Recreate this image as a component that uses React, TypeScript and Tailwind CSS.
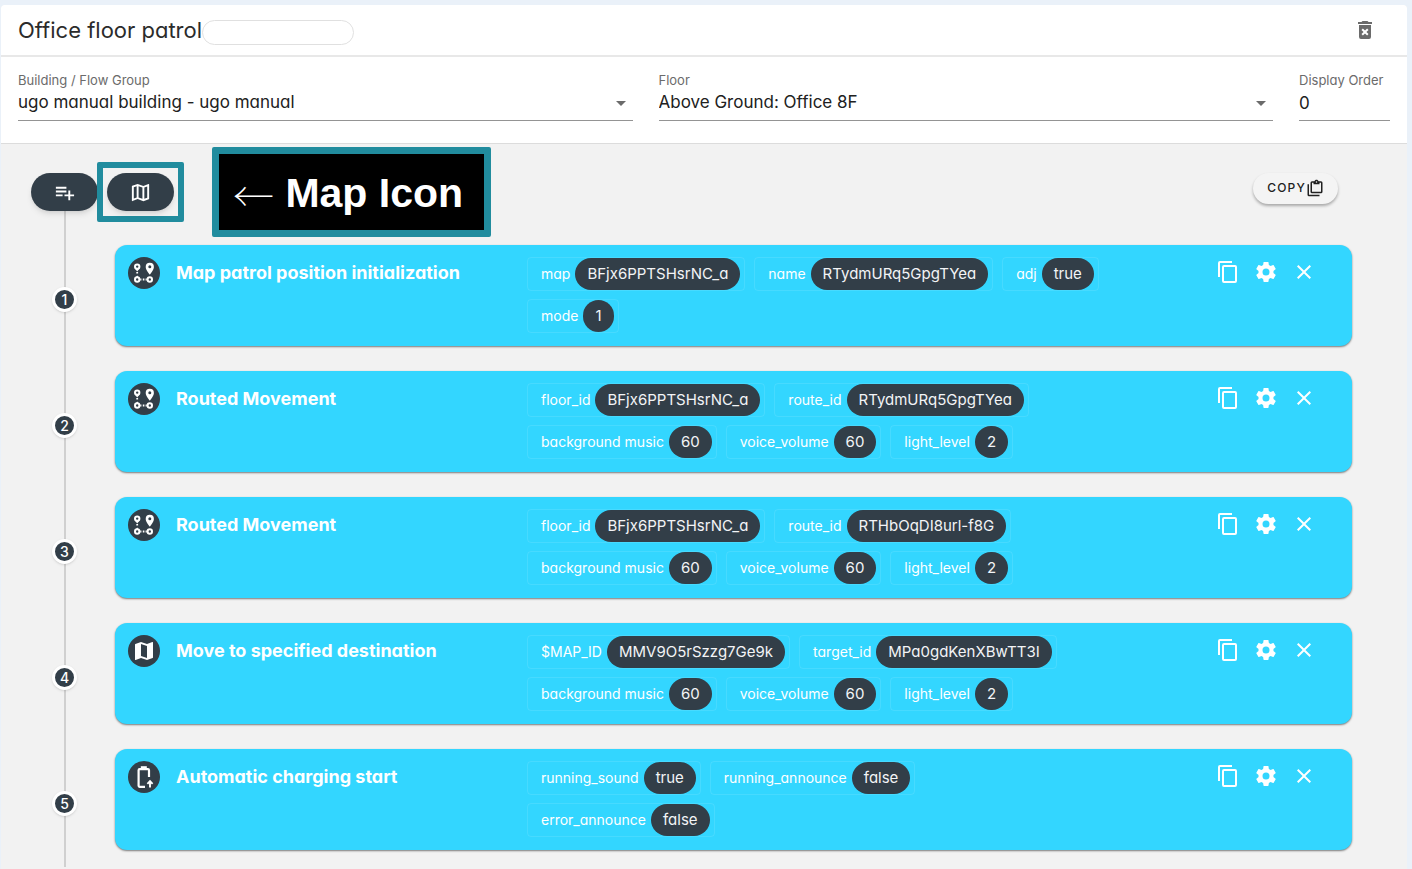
import { useState } from "react";
import type { ReactNode } from "react";

type IconName = "playlistPlus" | "mapOutline" | "map" | "copy" | "cog" | "close" | "trash" | "clipboard" | "caret";

const ICONS: Record<IconName, string> = {
    playlistPlus: "M3 16H10V14H3M18 14V10H16V14H12V16H16V20H18V16H22V14M14 6H3V8H14M14 10H3V12H14V10Z",
    mapOutline: "M20.5,3L20.34,3.03L15,5.1L9,3L3.36,4.9C3.15,4.97 3,5.15 3,5.38V20.5A0.5,0.5 0 0,0 3.5,21L3.66,20.97L9,18.9L15,21L20.64,19.1C20.85,19.03 21,18.85 21,18.62V3.5A0.5,0.5 0 0,0 20.5,3M10,5.47L14,6.87V18.53L10,17.13V5.47M5,6.46L8,5.45V17.15L5,18.31V6.46M19,17.54L16,18.55V6.86L19,5.7V17.54Z",
    map: "M15,19L9,16.89V5L15,7.11M20.5,3C20.44,3 20.39,3 20.34,3L15,5.1L9,3L3.36,4.9C3.15,4.97 3,5.15 3,5.38V20.5A0.5,0.5 0 0,0 3.5,21C3.55,21 3.61,21 3.66,20.97L9,18.9L15,21L20.64,19.1C20.85,19 21,18.85 21,18.62V3.5A0.5,0.5 0 0,0 20.5,3Z",
    copy: "M19,21H8V7H19M19,5H8A2,2 0 0,0 6,7V21A2,2 0 0,0 8,23H19A2,2 0 0,0 21,21V7A2,2 0 0,0 19,5M16,1H4A2,2 0 0,0 2,3V17H4V3H16V1Z",
    cog: "M12,15.5A3.5,3.5 0 0,1 8.5,12A3.5,3.5 0 0,1 12,8.5A3.5,3.5 0 0,1 15.5,12A3.5,3.5 0 0,1 12,15.5M19.43,12.97C19.47,12.65 19.5,12.33 19.5,12C19.5,11.67 19.47,11.34 19.43,11L21.54,9.37C21.73,9.22 21.78,8.95 21.66,8.73L19.66,5.27C19.54,5.05 19.27,4.96 19.05,5.05L16.56,6.05C16.04,5.66 15.5,5.32 14.87,5.07L14.5,2.42C14.46,2.18 14.25,2 14,2H10C9.75,2 9.54,2.18 9.5,2.42L9.13,5.07C8.5,5.32 7.96,5.66 7.44,6.05L4.95,5.05C4.73,4.96 4.46,5.05 4.34,5.27L2.34,8.73C2.21,8.95 2.27,9.22 2.46,9.37L4.57,11C4.53,11.34 4.5,11.67 4.5,12C4.5,12.33 4.53,12.65 4.57,12.97L2.46,14.63C2.27,14.78 2.21,15.05 2.34,15.27L4.34,18.73C4.46,18.95 4.73,19.03 4.95,18.95L7.44,17.94C7.96,18.34 8.5,18.68 9.13,18.93L9.5,21.58C9.54,21.82 9.75,22 10,22H14C14.25,22 14.46,21.82 14.5,21.58L14.87,18.93C15.5,18.67 16.04,18.34 16.56,17.94L19.05,18.95C19.27,19.03 19.54,18.95 19.66,18.73L21.66,15.27C21.78,15.05 21.73,14.78 21.54,14.63L19.43,12.97Z",
    close: "M19,6.41L17.59,5L12,10.59L6.41,5L5,6.41L10.59,12L5,17.59L6.41,19L12,13.41L17.59,19L19,17.59L13.41,12L19,6.41Z",
    trash: "M6,19A2,2 0 0,0 8,21H16A2,2 0 0,0 18,19V7H6V19M8.46,11.88L9.87,10.47L12,12.59L14.12,10.47L15.53,11.88L13.41,14L15.53,16.12L14.12,17.53L12,15.41L9.88,17.53L8.47,16.12L10.59,14L8.46,11.88M15.5,4L14.5,3H9.5L8.5,4H5V6H19V4H15.5Z",
    clipboard: "M4,7V21H18V23H4A2,2 0 0,1 2,21V7H4M20,3A2,2 0 0,1 22,5V17A2,2 0 0,1 20,19H8A2,2 0 0,1 6,17V5A2,2 0 0,1 8,3H11.18C11.6,1.84 12.7,1 14,1C15.3,1 16.4,1.84 16.82,3H20M14,3A1,1 0 0,0 13,4A1,1 0 0,0 14,5A1,1 0 0,0 15,4A1,1 0 0,0 14,3M10,7V5H8V17H20V5H18V7H10Z",
    caret: "M7,10L12,15L17,10H7Z",
};

function Icon({ name, size = 24 }: { name: IconName; size?: number }) {
    return (
        <svg width={size} height={size} viewBox="0 0 24 24" fill="currentColor" fillRule="evenodd" aria-hidden="true">
            <path d={ICONS[name]} />
        </svg>
    );
}

// Route and battery are drawn on the full 32px disc
function RouteIcon() {
    return (
        <svg width={32} height={32} viewBox="0 0 32 32" fill="none" stroke="currentColor" aria-hidden="true">
            <circle cx="9.2" cy="9.6" r="2.2" strokeWidth="2" />
            <path d="M6.8 11.4L9.2 14.4L11.6 11.4Z" fill="currentColor" stroke="none" />
            <path fillRule="evenodd" fill="currentColor" stroke="none" d="M21.8 5.8A4.1 4.1 0 0 0 17.7 9.9C17.7 13 21.8 17.6 21.8 17.6S25.9 13 25.9 9.9A4.1 4.1 0 0 0 21.8 5.8M21.8 8.2A1.5 1.5 0 1 1 21.8 11.2A1.5 1.5 0 1 1 21.8 8.2" />
            <circle cx="9.2" cy="22.5" r="2.2" strokeWidth="2" />
            <circle cx="21.8" cy="22.5" r="2.2" strokeWidth="2" />
            <path d="M7.6 20.4L9.2 18.4L10.8 20.4Z" fill="currentColor" stroke="none" />
            <path d="M9.2 15V16.6M12.2 22.5H13.4M14.8 22.5H16.4M17.6 22.5H18.8" strokeWidth="1.8" />
        </svg>
    );
}

function BatteryIcon() {
    return (
        <svg width={32} height={32} viewBox="0 0 32 32" fill="none" stroke="currentColor" aria-hidden="true">
            <path d="M21 16V9.2Q21 8.2 20 8.2H11.6Q10.6 8.2 10.6 9.2V24.8Q10.6 25.8 11.6 25.8H17" strokeWidth="2.2" />
            <path d="M12.8 5.2H18.8V8H12.8Z" fill="currentColor" stroke="none" />
            <path d="M22 26.6V21M19.4 22.8L22 20.2L24.6 22.8" strokeWidth="1.9" />
        </svg>
    );
}

interface Step {
    title: string;
    icon: ReactNode;
    params: [string, string][];
}

const LEVELS: [string, string][] = [["background music", "60"], ["voice_volume", "60"], ["light_level", "2"]];

const STEPS: Step[] = [
    {
        title: "Map patrol position initialization",
        icon: <RouteIcon />,
        params: [["map", "BFjx6PPTSHsrNC_a"], ["name", "RTydmURq5GpgTYea"], ["adj", "true"], ["mode", "1"]],
    },
    {
        title: "Routed Movement",
        icon: <RouteIcon />,
        params: [["floor_id", "BFjx6PPTSHsrNC_a"], ["route_id", "RTydmURq5GpgTYea"], ...LEVELS],
    },
    {
        title: "Routed Movement",
        icon: <RouteIcon />,
        params: [["floor_id", "BFjx6PPTSHsrNC_a"], ["route_id", "RTHbOqDI8url-f8G"], ...LEVELS],
    },
    {
        title: "Move to specified destination",
        icon: <Icon name="map" />,
        params: [["$MAP_ID", "MMV9O5rSzzg7Ge9k"], ["target_id", "MPa0gdKenXBwTT3I"], ...LEVELS],
    },
    {
        title: "Automatic charging start",
        icon: <BatteryIcon />,
        params: [["running_sound", "true"], ["running_announce", "false"], ["error_announce", "false"]],
    },
];

function SelectField({ id, label, value }: { id: string; label: string; value: string }) {
    return (
        <div className="min-w-0 flex-1">
            <label htmlFor={id} className="block text-[13px] leading-[18px] text-[#6b6b6b]">{label}</label>
            <div className="relative border-b border-[#949494] pb-1">
                <select id={id} defaultValue={value} className="block h-[27px] w-full appearance-none bg-transparent pr-6 text-[17px] text-[#212121] outline-none">
                    <option>{value}</option>
                </select>
                <span className="pointer-events-none absolute right-0 top-0.5 text-[#6b6b6b]"><Icon name="caret" /></span>
            </div>
        </div>
    );
}

function StepCard({ step }: { step: Step }) {
    return (
        <article className="flex min-w-0 flex-1 items-start rounded-xl bg-[#33d6ff] pb-[13px] pl-[13px] pr-9 pt-3 text-white shadow-[0_1px_2px_rgba(0,0,0,0.5)]">
            <div className="flex size-8 shrink-0 items-center justify-center rounded-full bg-[#323e48]">{step.icon}</div>
            <h2 className="ml-4 w-[351px] shrink-0 text-lg/8 font-bold">{step.title}</h2>
            <dl className="flex min-w-0 flex-1 flex-wrap gap-x-[9px] gap-y-2">
                {step.params.map(([key, val]) => (
                    <div key={key} className="flex items-center gap-[5px] rounded-sm border border-white/10 pl-[13px] pr-1">
                        <dt className="text-sm">{key}</dt>
                        <dd className="rounded-2xl bg-[#323e48] px-3 text-[15px] leading-8 text-gray-100">{val}</dd>
                    </div>
                ))}
            </dl>
            <div className="ml-[111px] mt-[3px] flex shrink-0 gap-[14px]">
                <button type="button" aria-label="Duplicate step"><Icon name="copy" /></button>
                <button type="button" aria-label="Step settings"><Icon name="cog" /></button>
                <button type="button" aria-label="Remove step"><Icon name="close" /></button>
            </div>
        </article>
    );
}

export default function App() {
    const [order, setOrder] = useState("0");
    const [tag, setTag] = useState("");

    return (
        <div className="min-h-screen bg-[#eaf1f9] pl-px pr-[5px] pt-[5px] font-[Inter,sans-serif] [font-feature-settings:'cv11']">
            <main className="flex min-h-[calc(100vh-5px)] flex-col overflow-hidden rounded-t bg-[#f2f2f2]">
                <header className="flex h-[52px] items-center border-b-2 border-[#e8e8e8] bg-white pl-[17px] pr-[30px]">
                    <h1 className="text-[22px] text-[#2b2b2b]">Office floor patrol</h1>
                    <input aria-label="Tag" value={tag} onChange={e => setTag(e.target.value)} className="mt-1 h-[25px] w-[152px] rounded-full border border-[#e0e0e0] px-3 text-[13px] outline-none" />
                    <button type="button" aria-label="Delete flow" className="ml-auto text-[#6b6b6b]"><Icon name="trash" /></button>
                </header>

                <section className="flex gap-[26px] border-b border-[#dcdcdc] bg-white px-[17px] pb-[22px] pt-[14px]">
                    <SelectField id="building" label="Building / Flow Group" value="ugo manual building - ugo manual" />
                    <SelectField id="floor" label="Floor" value="Above Ground: Office 8F" />
                    <div className="w-[91px]">
                        <label htmlFor="order" className="block whitespace-nowrap text-[13px] leading-[18px] text-[#6b6b6b]">Display Order</label>
                        <div className="border-b border-[#949494] pb-1">
                            <input id="order" value={order} onChange={e => setOrder(e.target.value)} className="block h-[27px] w-full bg-transparent text-[17px] text-[#212121] outline-none" />
                        </div>
                    </div>
                </section>

                <section className="relative flex-1 pb-[18px] pl-[30px] pr-[55px] pt-[3px]">
                    <div className="absolute bottom-0.5 left-[63px] top-16 w-0.5 bg-[#d0d0d0]" />
                    <div className="relative flex h-[90px] items-center">
                        <button type="button" aria-label="Add step" className="flex h-[38px] w-[67px] items-center justify-center rounded-full bg-[#323e48] text-white shadow-md"><Icon name="playlistPlus" size={23} /></button>
                        <div className="-ml-px rounded-xs border-6 border-[#218c9e] px-1 py-[5px]">
                            <button type="button" aria-label="Map" className="flex h-[38px] w-[67px] items-center justify-center rounded-full bg-[#323e48] text-white shadow-md"><Icon name="mapOutline" size={23} /></button>
                        </div>
                        <p className="ml-7 flex h-[90px] items-center whitespace-pre rounded-xs border-[7px] border-[#218c9e] bg-black pl-[14px] pr-[21px] pt-1 font-['Liberation_Sans',sans-serif] text-[41px] font-bold text-white">
                            <span className="font-['Noto_Sans_CJK_JP',sans-serif] font-thin leading-none">←</span> Map Icon
                        </p>
                        <button type="button" className="mb-2 ml-auto mr-[14px] flex h-[31px] items-center rounded-full bg-[#f4f4f4] px-[14px] text-xs font-medium tracking-widest text-[#212121] shadow-[0_2px_3px_rgba(0,0,0,0.3)]">
                            COPY<Icon name="clipboard" size={18} />
                        </button>
                    </div>

                    <ol className="relative mt-2 flex flex-col gap-[25px]">
                        {STEPS.map((step, i) => (
                            <li key={i} className="flex items-start">
                                <span className="ml-[21px] mr-[38px] mt-[42px] flex size-[25px] shrink-0 items-center justify-center rounded-full border-3 border-white bg-[#323e48] text-sm font-medium text-white shadow">{i + 1}</span>
                                <StepCard step={step} />
                            </li>
                        ))}
                    </ol>
                </section>
            </main>
        </div>
    );
}
